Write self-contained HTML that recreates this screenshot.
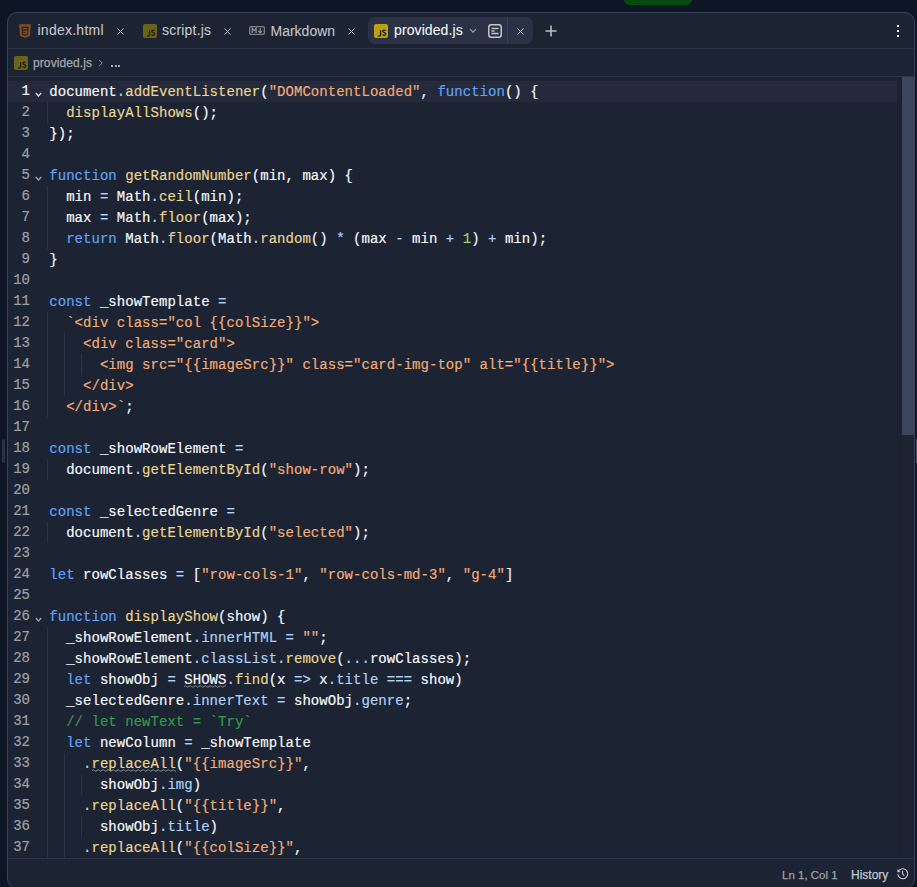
<!DOCTYPE html>
<html><head><meta charset="utf-8">
<style>
*{box-sizing:border-box;margin:0;padding:0}
html,body{width:917px;height:887px;overflow:hidden;background:#0e1525}
body{position:relative;font-family:"Liberation Sans",sans-serif}
.abs{position:absolute}
#panel{left:7px;top:12px;width:908px;height:877px;background:#1c2333;border:1px solid #3a4256;border-radius:10px}
.sep{position:absolute;height:1px;background:#2b3245}
.tt{position:absolute;-webkit-text-stroke:0.08px currentColor;font-size:14px;line-height:16px;color:#c2c8cc;white-space:nowrap}
.bc{position:absolute;-webkit-text-stroke:0.25px currentColor;font-size:12px;line-height:14px;color:#a3a8ad;white-space:nowrap}
.ln{position:absolute;-webkit-text-stroke:0.2px currentColor;left:0;width:30px;text-align:right;font-family:"Liberation Mono",monospace;font-size:14px;line-height:21px;color:#9da2a6;white-space:pre}
.cl{position:absolute;left:49.3px;letter-spacing:0.035px;-webkit-text-stroke:0.18px currentColor;font-family:"Liberation Mono",monospace;font-size:14px;line-height:21px;color:#f5f9fc;white-space:pre}
.g{position:absolute;width:1px;background:#2b3245}
.k{color:#62a2f6}
.f{color:#ead592}
.s{color:#f1ac76}
.p{color:#aed3f6}
.o{color:#b0d3f2}
.n{color:#9ed26a}
.c{color:#2f9b45}
.sq{text-decoration:underline wavy #9da2a6;text-decoration-thickness:1px;text-underline-offset:3px}
.js{position:absolute;width:14px;height:14px;border-radius:2px;background:#8c7a14}
.js span{position:absolute;right:1px;bottom:1px;font-size:6.5px;line-height:6px;color:#1c1c14;letter-spacing:-0.2px}
</style></head><body>
<div class="abs" style="left:624px;top:0;width:68px;height:5px;background:#054b10;border-radius:0 0 5px 5px"></div>
<div class="abs" style="left:2px;top:439px;width:3px;height:24px;background:#2b3245;border-radius:2px"></div>
<div class="abs" style="left:916px;top:439px;width:1px;height:24px;background:#4a5268"></div>
<div id="panel" class="abs"></div>

<!-- tab bar -->
<svg class="abs" style="left:19px;top:24px" width="12" height="14" viewBox="0 0 12 14"><path d="M0.2 0.2H11.8L10.9 12.1 6 13.8 1.1 12.1Z" fill="#8a4e1e"/><path d="M2.3 2.4H9.7L9.1 10.9 6 11.9 2.9 10.9Z" fill="#33261e"/><path d="M3.9 4.7H8.1M4.3 7.5H7.7V9.5L6 10.1 4.3 9.5" fill="none" stroke="#6e5238" stroke-width="1.3"/></svg>
<div class="tt" style="left:37.5px;top:21.8px;letter-spacing:0.25px">index.html</div>
<svg class="abs" style="left:116.8px;top:27.7px" width="7" height="7" viewBox="0 0 7 7"><path d="M0.4 0.4L6.6 6.6M6.6 0.4L0.4 6.6" stroke="#b8bec4" stroke-width="1"/></svg>

<svg class="abs" style="left:143px;top:24px" width="14" height="14" viewBox="0 0 14 14"><rect x="0" y="0" width="14" height="14" rx="2" fill="#6b6417"/><path d="M6.6 6.2v4.3c0 1.2-.6 1.6-1.5 1.6-.5 0-.9-.1-1.2-.3" fill="none" stroke="#1f2118" stroke-width="1.35"/><path d="M11.6 6.7c-.3-.4-.8-.6-1.4-.6-.8 0-1.4.4-1.4 1.1 0 1.5 2.9 1 2.9 2.8 0 .8-.7 1.3-1.6 1.3-.6 0-1.2-.2-1.6-.7" fill="none" stroke="#1f2118" stroke-width="1.35"/></svg>
<div class="tt" style="left:162px;top:21.8px;letter-spacing:0.2px">script.js</div>
<svg class="abs" style="left:224px;top:27.7px" width="7" height="7" viewBox="0 0 7 7"><path d="M0.4 0.4L6.6 6.6M6.6 0.4L0.4 6.6" stroke="#b8bec4" stroke-width="1"/></svg>

<svg class="abs" style="left:249px;top:26px" width="16" height="9" viewBox="0 0 16 9"><rect x="0.65" y="0.65" width="14.7" height="7.7" rx="1.3" fill="none" stroke="#7c8189" stroke-width="1.3"/><path d="M3.3 6.9V2.3L5.2 4.6 7.1 2.3V6.9" fill="none" stroke="#8b9098" stroke-width="1.3"/><path d="M11.2 2.1V6.6M9.4 5l1.8 1.8 1.8-1.8" fill="none" stroke="#8b9098" stroke-width="1.2"/></svg>
<div class="tt" style="left:270.5px;top:22.5px">Markdown</div>
<svg class="abs" style="left:347.6px;top:27.7px" width="7" height="7" viewBox="0 0 7 7"><path d="M0.4 0.4L6.6 6.6M6.6 0.4L0.4 6.6" stroke="#b8bec4" stroke-width="1"/></svg>

<div class="abs" style="left:368px;top:17px;width:165px;height:27px;background:#2b3245;border-radius:7px"></div>
<svg class="abs" style="left:374px;top:24px" width="14" height="14" viewBox="0 0 14 14"><rect x="0" y="0" width="14" height="14" rx="2" fill="#bba20e"/><path d="M6.6 6.2v4.3c0 1.2-.6 1.6-1.5 1.6-.5 0-.9-.1-1.2-.3" fill="none" stroke="#1d1c12" stroke-width="1.35"/><path d="M11.6 6.7c-.3-.4-.8-.6-1.4-.6-.8 0-1.4.4-1.4 1.1 0 1.5 2.9 1 2.9 2.8 0 .8-.7 1.3-1.6 1.3-.6 0-1.2-.2-1.6-.7" fill="none" stroke="#1d1c12" stroke-width="1.35"/></svg>
<div class="tt" style="left:394px;top:21.8px;color:#f5f9fc;letter-spacing:0.1px">provided.js</div>
<svg class="abs" style="left:469px;top:28px" width="8" height="6" viewBox="0 0 8 6"><path d="M1 1.2L4 4.2 7 1.2" fill="none" stroke="#9da2a6" stroke-width="1.2"/></svg>
<svg class="abs" style="left:488px;top:24px" width="14" height="14" viewBox="0 0 14 14"><rect x="0.8" y="0.8" width="12.4" height="12.4" rx="2.5" fill="none" stroke="#c2c8cc" stroke-width="1.5"/><path d="M3.5 4.5h7M3.5 7h3M3.5 9.5h7" stroke="#c2c8cc" stroke-width="1.3"/></svg>
<div class="abs" style="left:507px;top:17px;width:1px;height:27px;background:#394157"></div>
<svg class="abs" style="left:516.8px;top:27.5px" width="7" height="7" viewBox="0 0 7 7"><path d="M0.4 0.4L6.6 6.6M6.6 0.4L0.4 6.6" stroke="#d0d5da" stroke-width="1"/></svg>
<svg class="abs" style="left:545px;top:25px" width="12" height="12" viewBox="0 0 12 12"><path d="M6 0.5v11M0.5 6h11" stroke="#b8bec4" stroke-width="1.6"/></svg>

<div class="abs" style="left:897px;top:25px;width:2px;height:2px;background:#f5f9fc"></div>
<div class="abs" style="left:897px;top:30px;width:2px;height:2px;background:#f5f9fc"></div>
<div class="abs" style="left:897px;top:35px;width:2px;height:2px;background:#f5f9fc"></div>

<div class="sep" style="left:8px;top:48px;width:906px"></div>

<!-- breadcrumb -->
<svg class="abs" style="left:14px;top:56px" width="14" height="14" viewBox="0 0 14 14"><rect x="0" y="0" width="14" height="14" rx="2" fill="#6b6417"/><path d="M6.6 6.2v4.3c0 1.2-.6 1.6-1.5 1.6-.5 0-.9-.1-1.2-.3" fill="none" stroke="#1f2118" stroke-width="1.35"/><path d="M11.6 6.7c-.3-.4-.8-.6-1.4-.6-.8 0-1.4.4-1.4 1.1 0 1.5 2.9 1 2.9 2.8 0 .8-.7 1.3-1.6 1.3-.6 0-1.2-.2-1.6-.7" fill="none" stroke="#1f2118" stroke-width="1.35"/></svg>
<div class="bc" style="left:33px;top:56px;letter-spacing:0.1px">provided.js</div>
<svg class="abs" style="left:98px;top:59px" width="6" height="8" viewBox="0 0 6 8"><path d="M1.2 1L4.2 4 1.2 7" fill="none" stroke="#8a9096" stroke-width="1"/></svg>
<div class="abs" style="left:111px;top:65px;width:2px;height:2px;background:#a3a8ad"></div><div class="abs" style="left:114.5px;top:65px;width:2px;height:2px;background:#a3a8ad"></div><div class="abs" style="left:118px;top:65px;width:2px;height:2px;background:#a3a8ad"></div>

<div class="sep" style="left:8px;top:76px;width:906px"></div>

<div class="abs" style="left:8px;top:81px;width:890px;height:21px;background:#242a3b"></div>
<div class="g" style="left:47.0px;top:102px;height:21px"></div>
<div class="g" style="left:47.0px;top:186px;height:63px"></div>
<div class="g" style="left:47.0px;top:312px;height:105px"></div>
<div class="g" style="left:64.0px;top:333px;height:63px"></div>
<div class="g" style="left:81.0px;top:354px;height:21px"></div>
<div class="g" style="left:47.0px;top:459px;height:21px"></div>
<div class="g" style="left:47.0px;top:522px;height:21px"></div>
<div class="g" style="left:47.0px;top:627px;height:231px"></div>
<div class="g" style="left:64.0px;top:753px;height:105px"></div>
<div class="g" style="left:81.0px;top:774px;height:21px"></div>
<div class="g" style="left:81.0px;top:816px;height:21px"></div>
<div class="ln" style="top:81px;color:#f5f9fc">1</div>
<div class="cl" style="top:82px">document<span class="o">.</span><span class="f">addEventListener</span>(<span class="s">"DOMContentLoaded"</span>, <span class="k">function</span>() {</div>
<div class="ln" style="top:102px">2</div>
<div class="cl" style="top:103px">  <span class="f">displayAllShows</span>();</div>
<div class="ln" style="top:123px">3</div>
<div class="cl" style="top:124px">});</div>
<div class="ln" style="top:144px">4</div>
<div class="ln" style="top:165px">5</div>
<div class="cl" style="top:166px"><span class="k">function</span> <span class="f">getRandomNumber</span>(min, max) {</div>
<div class="ln" style="top:186px">6</div>
<div class="cl" style="top:187px">  min <span class="o">=</span> Math<span class="o">.</span><span class="f">ceil</span>(min);</div>
<div class="ln" style="top:207px">7</div>
<div class="cl" style="top:208px">  max <span class="o">=</span> Math<span class="o">.</span><span class="f">floor</span>(max);</div>
<div class="ln" style="top:228px">8</div>
<div class="cl" style="top:229px">  <span class="k">return</span> Math<span class="o">.</span><span class="f">floor</span>(Math<span class="o">.</span><span class="f">random</span>() <span class="o">*</span> (max <span class="o">-</span> min <span class="o">+</span> <span class="n">1</span>) <span class="o">+</span> min);</div>
<div class="ln" style="top:249px">9</div>
<div class="cl" style="top:250px">}</div>
<div class="ln" style="top:270px">10</div>
<div class="ln" style="top:291px">11</div>
<div class="cl" style="top:292px"><span class="k">const</span> _showTemplate <span class="o">=</span></div>
<div class="ln" style="top:312px">12</div>
<div class="cl" style="top:313px">  <span class="s">`&lt;div class="col {{colSize}}"&gt;</span></div>
<div class="ln" style="top:333px">13</div>
<div class="cl" style="top:334px">    <span class="s">&lt;div class="card"&gt;</span></div>
<div class="ln" style="top:354px">14</div>
<div class="cl" style="top:355px">      <span class="s">&lt;img src="{{imageSrc}}" class="card-img-top" alt="{{title}}"&gt;</span></div>
<div class="ln" style="top:375px">15</div>
<div class="cl" style="top:376px">    <span class="s">&lt;/div&gt;</span></div>
<div class="ln" style="top:396px">16</div>
<div class="cl" style="top:397px">  <span class="s">&lt;/div&gt;`</span>;</div>
<div class="ln" style="top:417px">17</div>
<div class="ln" style="top:438px">18</div>
<div class="cl" style="top:439px"><span class="k">const</span> _showRowElement <span class="o">=</span></div>
<div class="ln" style="top:459px">19</div>
<div class="cl" style="top:460px">  document<span class="o">.</span><span class="f">getElementById</span>(<span class="s">"show-row"</span>);</div>
<div class="ln" style="top:480px">20</div>
<div class="ln" style="top:501px">21</div>
<div class="cl" style="top:502px"><span class="k">const</span> _selectedGenre <span class="o">=</span></div>
<div class="ln" style="top:522px">22</div>
<div class="cl" style="top:523px">  document<span class="o">.</span><span class="f">getElementById</span>(<span class="s">"selected"</span>);</div>
<div class="ln" style="top:543px">23</div>
<div class="ln" style="top:564px">24</div>
<div class="cl" style="top:565px"><span class="k">let</span> rowClasses <span class="o">=</span> [<span class="s">"row-cols-1"</span>, <span class="s">"row-cols-md-3"</span>, <span class="s">"g-4"</span>]</div>
<div class="ln" style="top:585px">25</div>
<div class="ln" style="top:606px">26</div>
<div class="cl" style="top:607px"><span class="k">function</span> <span class="f">displayShow</span>(show) {</div>
<div class="ln" style="top:627px">27</div>
<div class="cl" style="top:628px">  _showRowElement<span class="o">.</span><span class="p">innerHTML</span> <span class="o">=</span> <span class="s">""</span>;</div>
<div class="ln" style="top:648px">28</div>
<div class="cl" style="top:649px">  _showRowElement<span class="o">.</span><span class="p">classList</span><span class="o">.</span><span class="f">remove</span>(<span class="o">...</span>rowClasses);</div>
<div class="ln" style="top:669px">29</div>
<div class="cl" style="top:670px">  <span class="k">let</span> showObj <span class="o">=</span> SHOWS<span class="o">.</span><span class="f">find</span>(x <span class="o">=&gt;</span> x<span class="o">.</span><span class="p">title</span> <span class="o">===</span> show)</div>
<div class="ln" style="top:690px">30</div>
<div class="cl" style="top:691px">  _selectedGenre<span class="o">.</span><span class="p">innerText</span> <span class="o">=</span> showObj<span class="o">.</span><span class="p">genre</span>;</div>
<div class="ln" style="top:711px">31</div>
<div class="cl" style="top:712px">  <span class="c">// let newText = `Try`</span></div>
<div class="ln" style="top:732px">32</div>
<div class="cl" style="top:733px">  <span class="k">let</span> newColumn <span class="o">=</span> _showTemplate</div>
<div class="ln" style="top:753px">33</div>
<div class="cl" style="top:754px">    <span class="o">.</span><span class="f">replaceAll</span>(<span class="s">"{{imageSrc}}"</span>,</div>
<div class="ln" style="top:774px">34</div>
<div class="cl" style="top:775px">      showObj<span class="o">.</span><span class="p">img</span>)</div>
<div class="ln" style="top:795px">35</div>
<div class="cl" style="top:796px">    <span class="o">.</span><span class="f">replaceAll</span>(<span class="s">"{{title}}"</span>,</div>
<div class="ln" style="top:816px">36</div>
<div class="cl" style="top:817px">      showObj<span class="o">.</span><span class="p">title</span>)</div>
<div class="ln" style="top:837px">37</div>
<div class="cl" style="top:838px">    <span class="o">.</span><span class="f">replaceAll</span>(<span class="s">"{{colSize}}"</span>,</div>
<svg class="abs" style="left:34.5px;top:91.5px" width="7" height="6" viewBox="0 0 7 6"><path d="M0.8 1 L3.5 4 L6.2 1" fill="none" stroke="#d5dade" stroke-width="1.4"/></svg>
<svg class="abs" style="left:34.5px;top:175.5px" width="7" height="6" viewBox="0 0 7 6"><path d="M0.8 1 L3.5 4 L6.2 1" fill="none" stroke="#9da2a6" stroke-width="1.4"/></svg>
<svg class="abs" style="left:34.5px;top:616.5px" width="7" height="6" viewBox="0 0 7 6"><path d="M0.8 1 L3.5 4 L6.2 1" fill="none" stroke="#9da2a6" stroke-width="1.4"/></svg>
<svg class="abs" style="left:184.3px;top:684px;overflow:hidden" width="42.2" height="5" viewBox="0 0 42.2 5"><path d="M0 2.5 Q1.25 1 2.50 2.5 T5.00 2.5 Q6.25 1 7.50 2.5 T10.00 2.5 Q11.25 1 12.50 2.5 T15.00 2.5 Q16.25 1 17.50 2.5 T20.00 2.5 Q21.25 1 22.50 2.5 T25.00 2.5 Q26.25 1 27.50 2.5 T30.00 2.5 Q31.25 1 32.50 2.5 T35.00 2.5 Q36.25 1 37.50 2.5 T40.00 2.5 Q41.25 1 42.50 2.5 T45.00 2.5" fill="none" stroke="#8a9096" stroke-width="1"/></svg>
<svg class="abs" style="left:91.5px;top:768px;overflow:hidden" width="84.4" height="5" viewBox="0 0 84.4 5"><path d="M0 2.5 Q1.25 1 2.50 2.5 T5.00 2.5 Q6.25 1 7.50 2.5 T10.00 2.5 Q11.25 1 12.50 2.5 T15.00 2.5 Q16.25 1 17.50 2.5 T20.00 2.5 Q21.25 1 22.50 2.5 T25.00 2.5 Q26.25 1 27.50 2.5 T30.00 2.5 Q31.25 1 32.50 2.5 T35.00 2.5 Q36.25 1 37.50 2.5 T40.00 2.5 Q41.25 1 42.50 2.5 T45.00 2.5 Q46.25 1 47.50 2.5 T50.00 2.5 Q51.25 1 52.50 2.5 T55.00 2.5 Q56.25 1 57.50 2.5 T60.00 2.5 Q61.25 1 62.50 2.5 T65.00 2.5 Q66.25 1 67.50 2.5 T70.00 2.5 Q71.25 1 72.50 2.5 T75.00 2.5 Q76.25 1 77.50 2.5 T80.00 2.5 Q81.25 1 82.50 2.5 T85.00 2.5" fill="none" stroke="#8a9096" stroke-width="1"/></svg>

<!-- scrollbar -->
<div class="abs" style="left:897px;top:77px;width:5px;height:781px;background:#1b2130"></div>
<div class="abs" style="left:902px;top:77px;width:13px;height:358px;background:#3d455d"></div>

<!-- footer -->
<div class="sep" style="left:8px;top:858px;width:906px"></div>
<div class="bc" style="left:782px;top:867.5px;font-size:11.5px;color:#9da2a6">Ln 1, Col 1</div>
<div class="bc" style="left:851px;top:867.5px;color:#c2c8cc">History</div>
<svg class="abs" style="left:896.1px;top:867.4px" width="13.2" height="13.2" viewBox="0 0 24 24"><path d="M3.4 13.5a9 9 0 1 0 2.6-7.6L3.5 8.6M3.5 5v3.6h3.6M12 7.5v5l2.6 2.6" fill="none" stroke="#c8cdd2" stroke-width="1.9" stroke-linecap="round" stroke-linejoin="round"/></svg>
</body></html>
